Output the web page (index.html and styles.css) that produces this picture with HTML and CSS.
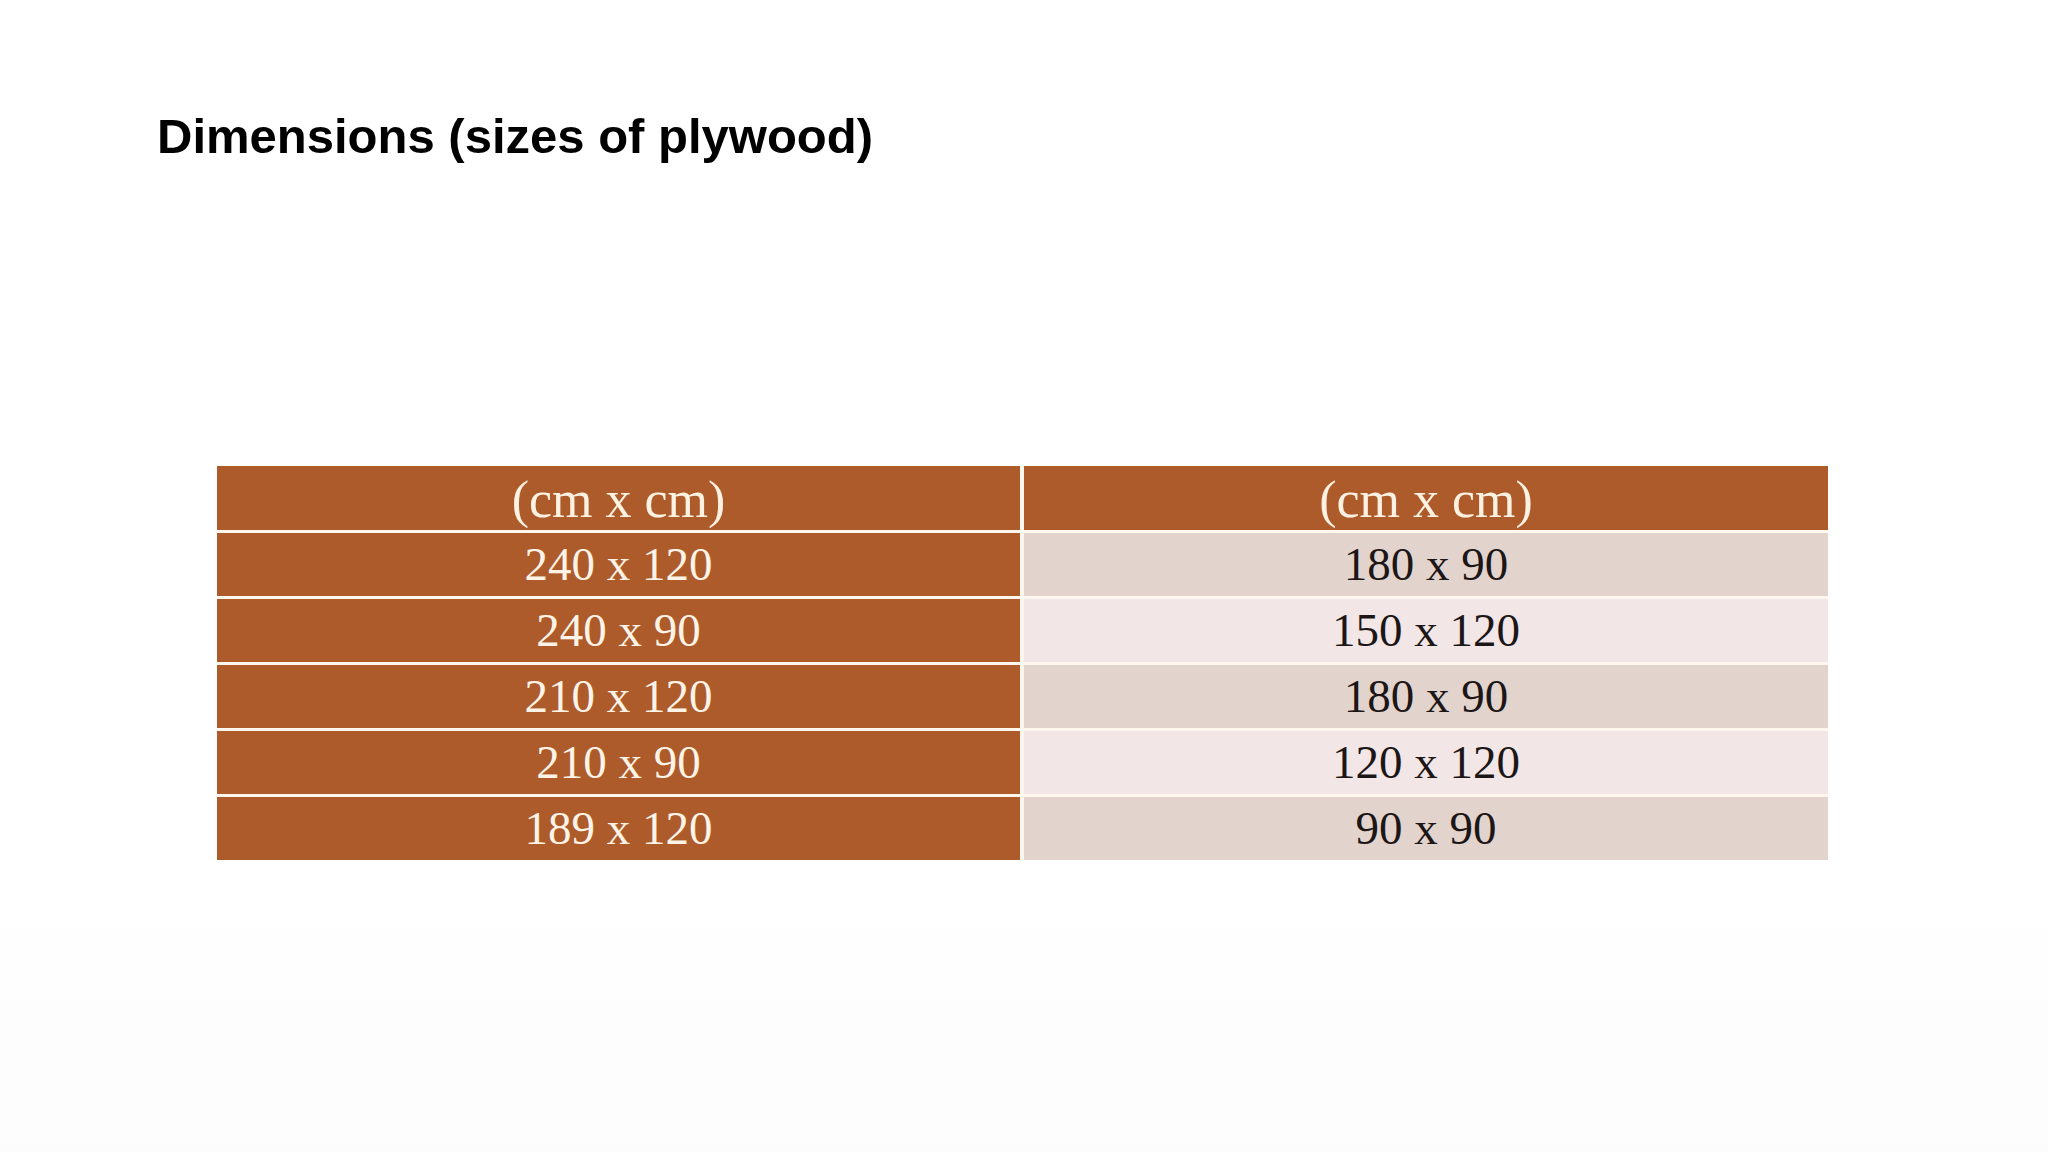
FILE: index.html
```html
<!DOCTYPE html>
<html lang="en">
<head>
<meta charset="utf-8">
<title>Dimensions (sizes of plywood)</title>
<link rel="stylesheet" href="styles.css">
</head>
<body>
<main class="slide">
  <h1 class="title">Dimensions (sizes of plywood)</h1>
  <div class="table">
    <div class="cell head">(cm x cm)</div>
    <div class="cell head">(cm x cm)</div>
    <div class="cell left">240 x 120</div>
    <div class="cell right dark">180 x 90</div>
    <div class="cell left">240 x 90</div>
    <div class="cell right light">150 x 120</div>
    <div class="cell left">210 x 120</div>
    <div class="cell right dark">180 x 90</div>
    <div class="cell left">210 x 90</div>
    <div class="cell right light">120 x 120</div>
    <div class="cell left">189 x 120</div>
    <div class="cell right dark">90 x 90</div>
  </div>
</main>
</body>
</html>
```

FILE: styles.css
```css
html, body {
  margin: 0;
  padding: 0;
  background: #ffffff;
}

.slide {
  width: 2048px;
  height: 1152px;
  box-sizing: border-box;
  padding: 108px 0 0 157px;
  background: linear-gradient(#ffffff 0, #ffffff 860px, #fcfcfc 1152px);
}

.title {
  margin: 0;
  font-family: "Liberation Sans", Arial, sans-serif;
  font-weight: bold;
  font-size: 49px;
  line-height: 56px;
  color: #000000;
}

.table {
  margin: 302px 0 0 60px;
  width: 1611px;
  display: grid;
  grid-template-columns: 803px 804px;
  grid-template-rows: 64px repeat(5, 63px);
  column-gap: 4px;
  row-gap: 3px;
  background: #fff6ee;
}

.cell {
  display: flex;
  align-items: center;
  justify-content: center;
  font-family: "Liberation Serif", "Times New Roman", serif;
  font-size: 47px;
  line-height: 1;
}

.head {
  background: #ad5b2a;
  color: #fdf1e2;
  font-size: 52px;
  padding-top: 4px;
  box-sizing: border-box;
}

.left {
  background: #ad5b2a;
  color: #fdf3e6;
}

.right {
  color: #1c1716;
}

.dark {
  background: #e3d3cd;
}

.light {
  background: #f2e6e6;
}
```
